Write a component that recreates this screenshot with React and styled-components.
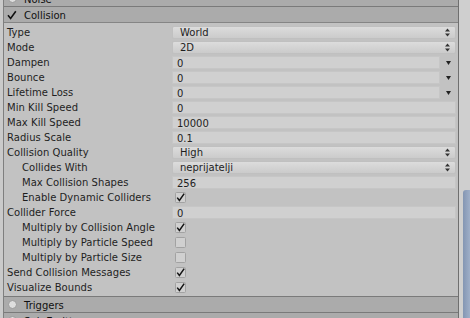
import styled, { createGlobalStyle } from 'styled-components';

const Global = createGlobalStyle`
  html, body {
    margin: 0;
    padding: 0;
    background: #c2c2c2;
    overflow: hidden;
  }
  body {
    font-family: "DejaVu Sans", Verdana, sans-serif;
    font-size: 10px;
    color: #1e1e1e;
  }
`;

const rows = [
  { label: 'Type', kind: 'popup', value: 'World' },
  { label: 'Mode', kind: 'popup', value: '2D' },
  { label: 'Dampen', kind: 'curve', value: '0' },
  { label: 'Bounce', kind: 'curve', value: '0' },
  { label: 'Lifetime Loss', kind: 'curve', value: '0' },
  { label: 'Min Kill Speed', kind: 'text', value: '0' },
  { label: 'Max Kill Speed', kind: 'text', value: '10000' },
  { label: 'Radius Scale', kind: 'text', value: '0.1' },
  { label: 'Collision Quality', kind: 'popup', value: 'High' },
  { label: 'Collides With', kind: 'popup', value: 'neprijatelji', indent: true },
  { label: 'Max Collision Shapes', kind: 'text', value: '256', indent: true },
  { label: 'Enable Dynamic Colliders', kind: 'check', value: true, indent: true },
  { label: 'Collider Force', kind: 'text', value: '0' },
  { label: 'Multiply by Collision Angle', kind: 'check', value: true, indent: true },
  { label: 'Multiply by Particle Speed', kind: 'check', value: false, indent: true },
  { label: 'Multiply by Particle Size', kind: 'check', value: false, indent: true },
  { label: 'Send Collision Messages', kind: 'check', value: true },
  { label: 'Visualize Bounds', kind: 'check', value: true },
];

function App() {
  return (
    <Page>
      <Global />
      <LeftGutter />
      <Panel>
        <Header $top>
          <Toggle />
          <span>Noise</span>
        </Header>
        <Header $open>
          <HeaderCheck width="10" height="10" viewBox="0 0 10 10">
            <path d="M1 5.2 L3.6 8.4 L8.8 1.2" fill="none" stroke="#111" strokeWidth="1.6" />
          </HeaderCheck>
          <span>Collision</span>
        </Header>
        <Rows>
          {rows.map((r) => (
            <Row key={r.label}>
              <Label $indent={r.indent}>{r.label}</Label>
              <Value r={r} />
            </Row>
          ))}
        </Rows>
        <Header>
          <Toggle />
          <span>Triggers</span>
        </Header>
        <Header>
          <Toggle />
          <span>Sub Emitters</span>
        </Header>
      </Panel>
      <RightGutter>
        <Thumb />
      </RightGutter>
    </Page>
  );
}

function Value({ r }) {
  if (r.kind === 'popup') {
    return (
      <Popup>
        <span>{r.value}</span>
        <svg width="5" height="9" viewBox="0 0 5 9">
          <path d="M0 3.5 L2.5 0.5 L5 3.5 Z M0 5.5 L2.5 8.5 L5 5.5 Z" fill="#333" />
        </svg>
      </Popup>
    );
  }
  if (r.kind === 'curve') {
    return (
      <CurveWrap>
        <Field>{r.value}</Field>
        <ArrowBox>
          <svg width="5" height="4" viewBox="0 0 5 4">
            <path d="M0 0 L5 0 L2.5 4 Z" fill="#222" />
          </svg>
        </ArrowBox>
      </CurveWrap>
    );
  }
  if (r.kind === 'check') {
    return (
      <CheckBox width="11" height="11" viewBox="0 0 11 11">
        <rect x="0.5" y="0.5" width="10" height="10" rx="1" fill="#d0d0d0" stroke="#a2a2a2" />
        {r.value && (
          <path d="M2.2 5.6 L4.4 8.4 L9.2 1.6" fill="none" stroke="#141414" strokeWidth="1.5" />
        )}
      </CheckBox>
    );
  }
  return <Field>{r.value}</Field>;
}

export default App;

const Page = styled.div`
  display: flex;
  width: 470px;
  height: 318px;
  overflow: hidden;
`;

const LeftGutter = styled.div`
  width: 3px;
  background: #cacaca;
  border-right: 1px solid #7f7f7f;
`;

const Panel = styled.div`
  width: 454px;
  display: flex;
  flex-direction: column;
  background: #c2c2c2;
  border-right: 1px solid #6f6f6f;
`;

const Header = styled.div`
  flex: none;
  height: 15px;
  margin-top: ${(p) => (p.$top ? '-10px' : '0')};
  display: flex;
  align-items: center;
  gap: 6px;
  padding-left: 3px;
  background: #ababab;
  border-top: 1px solid #7a7a7a;
  border-bottom: ${(p) => (p.$open ? '1px solid #858585' : 'none')};
  color: #111;
  font-size: 10px;
  span {
    padding-top: 1px;
  }
`;

const HeaderCheck = styled.svg`
  margin-left: 0;
  margin-right: 1px;
`;

const Toggle = styled.div`
  width: 9px;
  height: 9px;
  margin-left: 1px;
  margin-right: 1px;
  border-radius: 50%;
  background: #dedede;
  border: 1px solid #9a9a9a;
  box-sizing: border-box;
`;

const Rows = styled.div`
  padding: 2px 2px 1px 0;
`;

const Row = styled.div`
  display: grid;
  grid-template-columns: 168px 1fr;
  align-items: center;
  height: 15px;
`;

const Label = styled.div`
  padding-left: ${(p) => (p.$indent ? '18px' : '3px')};
  white-space: nowrap;
  letter-spacing: 0.05px;
`;

const Field = styled.div`
  flex: 1;
  height: 13px;
  box-sizing: border-box;
  padding-left: 4px;
  line-height: 13px;
  background: #d0d0d0;
  border: 1px solid #c6c6c6;
`;

const Popup = styled.div`
  height: 13px;
  box-sizing: border-box;
  display: flex;
  align-items: center;
  justify-content: space-between;
  padding: 0 5px 0 7px;
  background: linear-gradient(#dcdcdc, #cbcbcb);
  border: 1px solid #c0c0c0;
  border-radius: 2px;
`;

const CurveWrap = styled.div`
  display: flex;
  align-items: center;
`;

const ArrowBox = styled.div`
  width: 15px;
  display: flex;
  justify-content: center;
  padding-left: 1px;
`;

const CheckBox = styled.svg`
  margin-left: 3px;
`;

const RightGutter = styled.div`
  flex: 1;
  display: flex;
  justify-content: flex-end;
  padding-top: 190px;
  background: #cfcfcf;
`;

const Thumb = styled.div`
  width: 7px;
  background: linear-gradient(90deg, #8496b3, #9fafc8);
  border-radius: 3px 0 0 0;
`;
